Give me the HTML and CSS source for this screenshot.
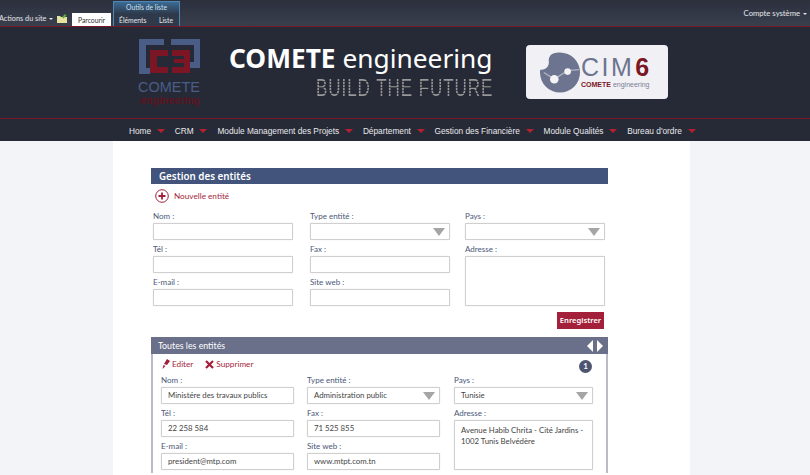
FILE: index.html
```html
<!DOCTYPE html>
<html lang="fr">
<head>
    <meta charset="UTF-8">
    <meta name="viewport" content="width=device-width, initial-scale=1.0">
    <title>Gestion des entités</title>
    <link rel="stylesheet" href="styles.css">
</head>
<body>
    <div class="ribbon">
        <span class="site-actions">Actions du site <i class="caret"></i></span>
        <svg class="folder-icon" width="10" height="9" viewBox="0 0 10 9">
            <path d="M0 2h3l1 1h6v6H0z" fill="#e6e2a0"/>
            <path d="M5 3l3-3 1.500 1.500-3 3z" fill="#5aa83c"/>
        </svg>
        <span class="tab-browse">Parcourir</span>
        <div class="tab-group">
            <div class="tab-group-title">Outils de liste</div>
            <div class="tab-group-items"><span>Éléments</span><span>Liste</span></div>
        </div>
        <span class="account">Compte système <i class="caret"></i></span>
    </div>

    <header class="banner">
        <svg class="logo" width="62" height="68" viewBox="0 0 62 68">
            <path d="M0 0h25v6H7v23h4v6H0zM32 0h29v29H50v-6h5V6H32z" fill="#4a5d87"/>
            <path d="M11 11h18v6H18v11h11v6H11zM33 11h18v23H33v-6h12v-4H35v-4h10v-3H33z" fill="#7c1524"/>
            <text x="30" y="53" class="logo-name">COMETE</text>
            <text x="31" y="65" class="logo-sub">engineering</text>
        </svg>
        <div class="brand">
            <div class="brand-name"><b>COMETE</b> engineering</div>
            <div class="brand-tag">BUILD THE FUTURE</div>
        </div>
        <div class="cim">
            <svg width="40" height="41" viewBox="0 0 42 42">
                <path d="M21 0a21 21 0 1 1-21 21c0-1 0-2 .2-3 5 1 10-3 9-9C9 5 11 2 14 1c2-.7 5-1 7-1z" fill="#6d7490"/>
                <path d="M4 21l11 7 14-9 12-1" stroke="#aeb2c2" stroke-width="1.500" fill="none"/>
                <circle cx="15" cy="28" r="4.500" fill="#f4f4f7"/>
                <circle cx="29" cy="20" r="3.500" fill="#f4f4f7"/>
            </svg>
            <div class="cim-text">
                <div class="cim-name">CIM<b>6</b></div>
                <div class="cim-sub"><b>COMETE</b> engineering</div>
            </div>
        </div>
    </header>

    <nav class="menu">
        <a>Home</a><a>CRM</a><a>Module Management des Projets</a><a>Département</a><a>Gestion des Financière</a><a>Module Qualités</a><a>Bureau d'ordre</a>
    </nav>

    <main class="content">
        <h2 class="page-title">Gestion des entités</h2>
        <div class="new-entity">
            <svg width="14" height="14" viewBox="0 0 14 14">
                <circle cx="7" cy="7" r="6.300" fill="none" stroke="#a31f3a"/>
                <path d="M7 3.500v7M3.500 7h7" stroke="#a31f3a" stroke-width="1.800"/>
            </svg>
            Nouvelle entité
        </div>

        <form class="entity-form">
            <div class="field"><label>Nom :</label><div class="box"></div></div>
            <div class="field"><label>Type entité :</label><div class="box select"></div></div>
            <div class="field"><label>Pays :</label><div class="box select"></div></div>
            <div class="field"><label>Tél :</label><div class="box"></div></div>
            <div class="field"><label>Fax :</label><div class="box"></div></div>
            <div class="field tall"><label>Adresse :</label><div class="box"></div></div>
            <div class="field"><label>E-mail :</label><div class="box"></div></div>
            <div class="field"><label>Site web :</label><div class="box"></div></div>
        </form>
        <div class="form-actions"><span class="save-btn">Enregistrer</span></div>

        <section class="panel">
            <div class="panel-head">
                <span>Toutes les entités</span>
                <span class="arrows"><i class="arrow-left"></i><i class="arrow-right"></i></span>
            </div>
            <div class="panel-body">
                <div class="actions">
                    <span class="action">
                        <svg width="8" height="10" viewBox="0 0 8 10"><path d="M5 0l3 2-3 4-3-1zM1.500 6l2 1-3 3z" fill="#a31f3a"/></svg>
                        Editer
                    </span>
                    <span class="action">
                        <svg width="9" height="9" viewBox="0 0 9 9"><path d="M1 1l7 7M8 1L1 8" stroke="#a31f3a" stroke-width="2.200"/></svg>
                        Supprimer
                    </span>
                    <span class="page-badge">1</span>
                </div>
                <div class="entity-form filled">
                    <div class="field"><label>Nom :</label><div class="box">Ministére des travaux publics</div></div>
                    <div class="field"><label>Type entité :</label><div class="box select">Administration public</div></div>
                    <div class="field"><label>Pays :</label><div class="box select">Tunisie</div></div>
                    <div class="field"><label>Tél :</label><div class="box">22 258 584</div></div>
                    <div class="field"><label>Fax :</label><div class="box">71 525 855</div></div>
                    <div class="field tall"><label>Adresse :</label><div class="box">Avenue Habib Chrita - Cité Jardins - 1002 Tunis Belvédère</div></div>
                    <div class="field"><label>E-mail :</label><div class="box">president@mtp.com</div></div>
                    <div class="field"><label>Site web :</label><div class="box">www.mtpt.com.tn</div></div>
                </div>
            </div>
        </section>
    </main>
</body>
</html>
```

FILE: styles.css
```css
html, body {
    height: 100%;
    overflow: hidden;
}
body {
    margin: 0;
    font-family: Lato, "Noto Sans", sans-serif;
    background: #f3f4f8;
    color: #333;
}

/* top ribbon */
.ribbon {
    height: 26px;
    display: flex;
    align-items: flex-end;
    background: linear-gradient(#2c303d, #3a3f4e);
    color: #e4e6ea;
    font-size: 8px;
    border-bottom: 1px solid #7b1626;
}
.site-actions {
    margin: 0 0 3px -1px;
    width: 58px;
    font-size: 7.300px;
    white-space: nowrap;
}
.caret {
    display: inline-block;
    border: 2px solid transparent;
    border-top-color: #e4e6ea;
    border-bottom: 0;
    vertical-align: middle;
    margin-left: 1px;
}
.folder-icon {
    margin-bottom: 3px;
    flex: none;
}
.tab-browse {
    width: 39px;
    height: 13px;
    margin-left: 5px;
    background: #fff;
    color: #333;
    font-size: 6.800px;
    text-align: center;
    line-height: 14px;
}
.tab-group {
    width: 67px;
    height: 25px;
    margin-left: 2px;
    border: 1px solid #4f86b4;
    border-bottom: 0;
    box-sizing: border-box;
    background: linear-gradient(#3a6b94, #2e3a4c 50%, #30394a);
    font-size: 6.800px;
}
.tab-group-title {
    height: 11px;
    line-height: 10px;
    text-align: center;
    color: #cfe2f2;
}
.tab-group-items {
    display: flex;
    justify-content: space-between;
    padding: 2px 6px 0 5px;
    line-height: 11px;
}
.account {
    margin: 0 3px 8px auto;
    font-size: 7.700px;
}

/* banner */
.banner {
    height: 91px;
    display: flex;
    align-items: flex-start;
    background: #262a37;
    border-bottom: 1px solid #7b1626;
}
.logo {
    flex: none;
    margin: 12px 0 0 139px;
    overflow: visible;
}
.logo-name {
    font-family: "Liberation Sans", sans-serif;
    font-size: 14.500px;
    fill: #4a5d87;
    text-anchor: middle;
}
.logo-sub {
    font-family: "Liberation Sans", sans-serif;
    font-size: 10.500px;
    font-weight: bold;
    fill: #5e1420;
    text-anchor: middle;
}
.brand {
    flex: none;
    width: 263px;
    margin: 15px 0 0 28px;
    font-family: "Noto Sans", sans-serif;
}
.brand-name {
    font-size: 26.300px;
    line-height: 32px;
    color: #fff;
    white-space: nowrap;
}
.brand-tag {
    width: 248px;
    margin: 2px 0 0 87px;
    transform: scaleX(.71);
    transform-origin: left;
    font-family: "Liberation Sans", sans-serif;
    font-size: 24px;
    line-height: 24px;
    letter-spacing: 1.300px;
    white-space: nowrap;
    color: transparent;
    background: repeating-linear-gradient(#999 0 2px, #4a4a4a 2px 3px);
    -webkit-background-clip: text;
    background-clip: text;
}
.cim {
    flex: none;
    width: 142px;
    height: 54px;
    margin: 18px 0 0 34px;
    display: flex;
    align-items: center;
    gap: 1px;
    padding-left: 14px;
    box-sizing: border-box;
    background: #f1f1f5;
    border-radius: 4px;
}
.cim-name {
    font-family: "Liberation Sans", sans-serif;
    font-size: 25px;
    line-height: 24px;
    letter-spacing: 2.500px;
    color: #6d7490;
}
.cim-name b {
    color: #7c1524;
    margin-left: 1px;
}
.cim-sub {
    margin-top: 1px;
    font-family: "Liberation Sans", sans-serif;
    font-size: 7px;
    line-height: 9px;
    color: #7a8095;
    white-space: nowrap;
}
.cim-sub b {
    color: #7c1524;
}

/* menu */
.menu {
    height: 22px;
    display: flex;
    gap: 10px;
    padding-left: 129px;
    background: #262a37;
    font-family: "Liberation Sans", sans-serif;
    font-size: 8.300px;
    line-height: 25px;
    color: #e8e9ec;
}
.menu a {
    white-space: nowrap;
}
.menu a::after {
    content: "";
    display: inline-block;
    margin-left: 5.700px;
    vertical-align: 1px;
    border: 4px solid transparent;
    border-top-color: #b3202e;
    border-bottom: 0;
}

/* content */
.content {
    width: 577px;
    margin-left: 113px;
    padding: 27px 82px 0 38px;
    box-sizing: border-box;
    height: 334px;
    background: #fff;
}
.page-title {
    margin: 0;
    height: 16px;
    padding-left: 8px;
    background: #42547c;
    color: #fff;
    font-family: "Noto Sans", sans-serif;
    font-size: 9.800px;
    font-weight: 600;
    line-height: 17px;
}
.new-entity {
    display: flex;
    align-items: center;
    gap: 5px;
    height: 14px;
    margin: 5px 0 0 4px;
    color: #a31f3a;
    font-size: 8.200px;
}
.entity-form {
    display: grid;
    grid-template-columns: 140px 140px 140px;
    column-gap: 16px;
    grid-auto-rows: 33px;
    margin: 7px 0 0 2px;
}
.entity-form .field:nth-child(2), .entity-form .field:nth-child(5), .entity-form .field:nth-child(8) {
    margin: 0 -1px 0 1px;
}
.field label {
    display: block;
    height: 13px;
    color: #4a5878;
    font-size: 8px;
    line-height: 13px;
}
.box {
    height: 17px;
    box-sizing: border-box;
    border: 1px solid #cfcfcf;
    border-radius: 1px;
    box-shadow: 0 0 1px #ccc;
    background: #fff;
    padding: 0 6px;
    font-size: 7.800px;
    line-height: 15px;
    color: #444;
    white-space: nowrap;
    position: relative;
}
.select::after {
    content: "";
    position: absolute;
    right: 4px;
    top: 4px;
    border: 6px solid transparent;
    border-top: 8px solid #a5a5a5;
    border-bottom: 0;
}
.tall {
    grid-row: span 2;
    grid-column: 3;
}
.tall .box {
    height: 50px;
    white-space: normal;
    padding: 4px 2px 0 6px;
    line-height: 10.500px;
}
.form-actions {
    display: flex;
    justify-content: flex-end;
    margin: 3px 4px 0 0;
}
.save-btn {
    width: 47px;
    height: 17px;
    background: #a31f3a;
    color: #fff;
    font-family: "Noto Sans", sans-serif;
    font-size: 7.600px;
    font-weight: 600;
    line-height: 17px;
    text-align: center;
}
.panel {
    margin-top: 8px;
    border: 2px solid #b9bcc8;
    border-top: 0;
    border-bottom: 0;
}
.panel-head {
    display: flex;
    justify-content: space-between;
    align-items: center;
    height: 17px;
    margin: 0 -2px;
    padding: 0 5px 0 7px;
    background: #6a6f8a;
    color: #fff;
    font-size: 8.800px;
}
.arrows {
    display: flex;
    gap: 4px;
}
.arrow-left, .arrow-right {
    border: 6px solid transparent;
}
.arrow-left {
    border-right: 6px solid #fff;
    border-left: 0;
}
.arrow-right {
    border-left: 6px solid #fff;
    border-right: 0;
}
.panel-body {
    padding: 0 12px 0 8px;
}
.actions {
    display: flex;
    align-items: center;
    gap: 12px;
    height: 20px;
    padding-left: 1px;
    font-size: 8.200px;
    color: #a31f3a;
}
.action {
    display: flex;
    align-items: center;
    gap: 2px;
}
.page-badge {
    width: 13px;
    height: 13px;
    margin: 4px 2px 0 auto;
    border-radius: 50%;
    background: #4e5570;
    color: #fff;
    font-size: 8px;
    font-weight: bold;
    line-height: 13px;
    text-align: center;
}
.entity-form.filled {
    grid-template-columns: 133px 132px 139px;
    column-gap: 14px;
    margin: 0;
}
.filled .field:nth-child(2), .filled .field:nth-child(5), .filled .field:nth-child(8) {
    margin: 0 0 0 -1px;
}
```
